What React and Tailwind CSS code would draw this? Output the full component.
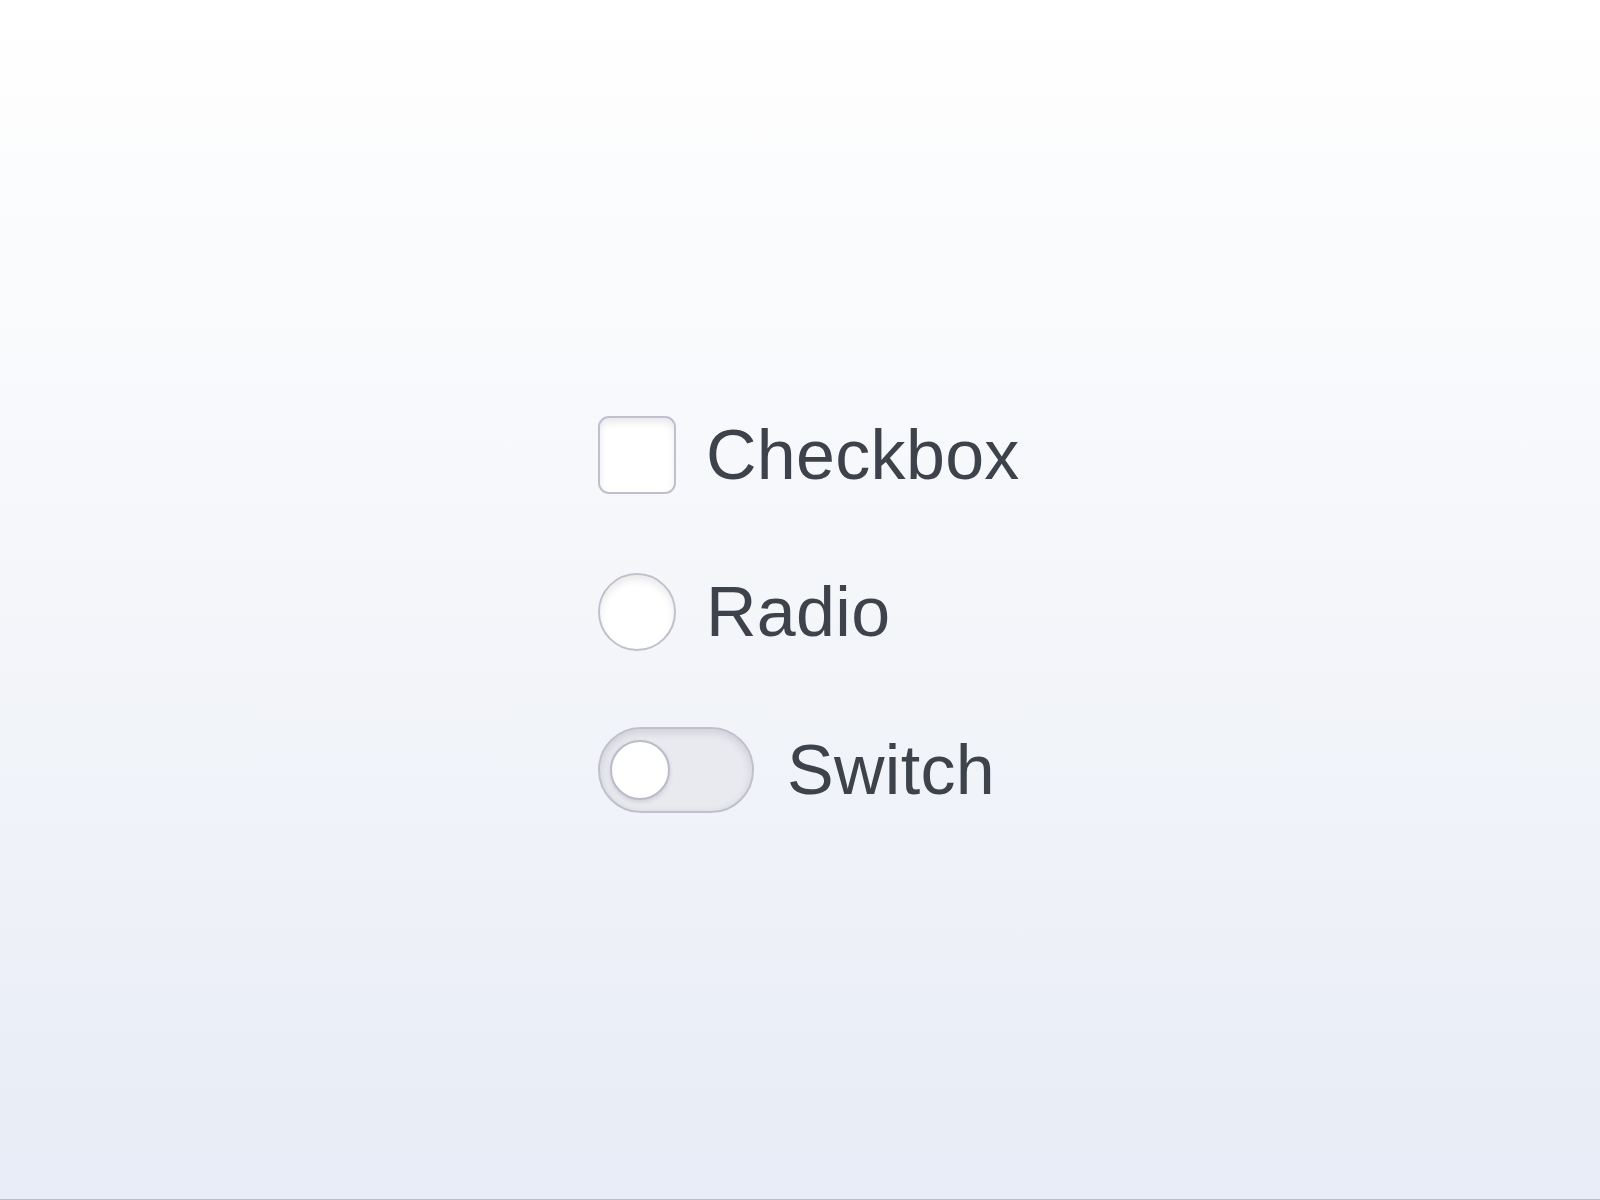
import React from 'react';

const Row = ({ children, label, gap = 'gap-[30px]' }) => (
    <div className={`flex items-center ${gap}`}>
        {children}
        <span className="text-[70px] leading-none text-[#3e434b] tracking-[0.3px]">{label}</span>
    </div>
);

export default function App() {
    return (
        <div
            className="h-[1200px] w-full border-b border-[#b9bdc7] bg-gradient-to-b from-[#ffffff] via-[#f4f6fa] to-[#e8ecf6] pl-[598px] pt-[416px]"
            style={{ fontFamily: '"Liberation Sans", Arial, sans-serif' }}
        >
            <div className="flex flex-col">
                <Row label="Checkbox">
                    <div className="h-[78px] w-[78px] rounded-[11px] border-[2.5px] border-[#bfc0ce] bg-white shadow-[inset_0_5px_7px_rgba(60,60,90,0.10)]" />
                </Row>
                <div className="mt-[79px]">
                    <Row label="Radio">
                        <div className="h-[78px] w-[78px] rounded-full border-[2.5px] border-[#c0c1cd] bg-white shadow-[inset_0_5px_7px_rgba(60,60,90,0.10)]" />
                    </Row>
                </div>
                <div className="mt-[76px]">
                    <Row label="Switch" gap="gap-[33px]">
                        <div className="flex h-[86px] w-[156px] items-center rounded-full border-[2.5px] border-[#bfc0cc] bg-[#e9eaef] pl-[10px] shadow-[inset_0_3px_8px_rgba(60,60,90,0.16)]">
                            <div className="h-[60px] w-[60px] rounded-full border-[2.5px] border-[#babbc8] bg-white shadow-[0_2px_4px_rgba(60,60,90,0.15)]" />
                        </div>
                    </Row>
                </div>
            </div>
        </div>
    );
}
